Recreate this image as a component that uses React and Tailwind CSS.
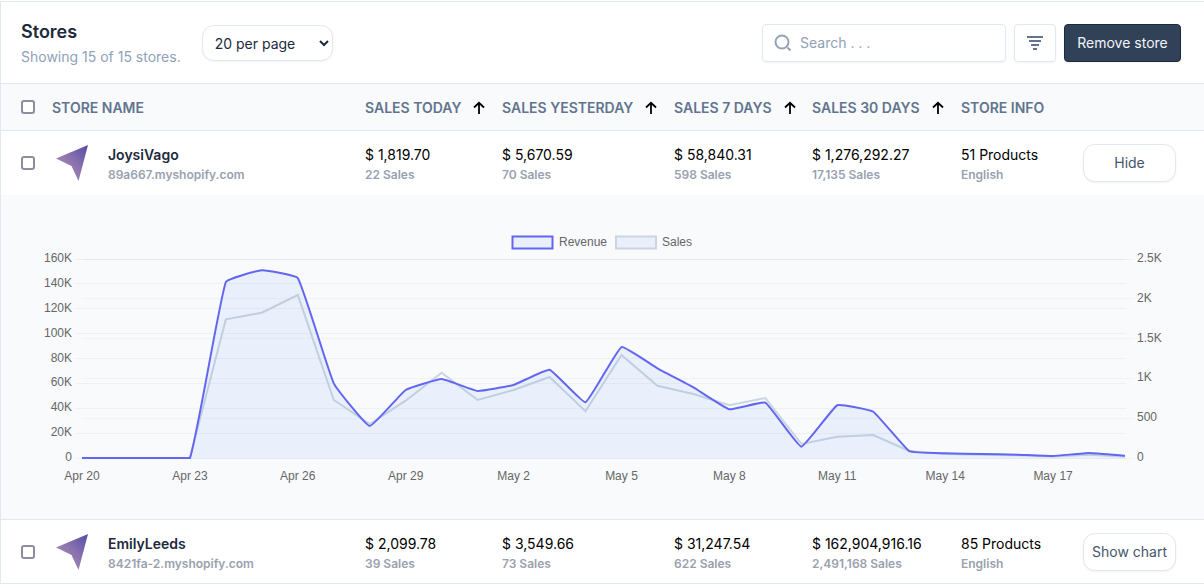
import React, { useState } from 'react';

const stores = [
  {
    name: 'JoysiVago',
    domain: '89a667.myshopify.com',
    today: ['$ 1,819.70', '22 Sales'],
    yesterday: ['$ 5,670.59', '70 Sales'],
    week: ['$ 58,840.31', '598 Sales'],
    month: ['$ 1,276,292.27', '17,135 Sales'],
    info: ['51 Products', 'English'],
  },
  {
    name: 'EmilyLeeds',
    domain: '8421fa-2.myshopify.com',
    today: ['$ 2,099.78', '39 Sales'],
    yesterday: ['$ 3,549.66', '73 Sales'],
    week: ['$ 31,247.54', '622 Sales'],
    month: ['$ 162,904,916.16', '2,491,168 Sales'],
    info: ['85 Products', 'English'],
  },
];

// Revenue in thousands, sales in orders, one value per day from Apr 20
const revenue = [
  0, 0, 0, 0, 141.5, 151, 144.7, 60, 25.7, 54.7, 63.5, 53.9, 58.7, 71, 44.8,
  89.2, 72.1, 56.8, 39.2, 44.5, 9.1, 42.4, 37.2, 5.6, 3.8, 3.2, 2.7, 1.6, 4, 1.8,
];
const sales = [
  0, 0, 0, 0, 1742, 1825, 2048, 729, 427, 720, 1072, 729, 854, 1018, 587,
  1294, 908, 804, 662, 754, 176, 268, 289, 88, 50, 40, 35, 20, 40, 20,
];
const dayLabels = ['Apr 20', 'Apr 23', 'Apr 26', 'Apr 29', 'May 2', 'May 5', 'May 8', 'May 11', 'May 14', 'May 17'];
const revenueTicks = [0, 20, 40, 60, 80, 100, 120, 140, 160];
const salesTicks = [0, 500, 1000, 1500, 2000, 2500];

const TOP = 64;
const BOTTOM = 263;
const LEFT = 81;
const RIGHT = 1125;
const STEP = (RIGHT - LEFT - 1) / (revenue.length - 1);

const toPoints = (values, max) =>
  values.map((value, i) => [LEFT + i * STEP, BOTTOM - (value / max) * (BOTTOM - TOP)]);

const clamp = (y) => Math.min(BOTTOM, Math.max(TOP, y));

const curvePath = (points, tension) => {
  const controls = points.map((point, i) => {
    const prev = points[i - 1] || point;
    const next = points[i + 1] || point;
    const before = Math.hypot(point[0] - prev[0], point[1] - prev[1]);
    const after = Math.hypot(next[0] - point[0], next[1] - point[1]);
    const a = (tension * before) / (before + after);
    const b = (tension * after) / (before + after);
    const dx = next[0] - prev[0];
    const dy = next[1] - prev[1];
    return {
      in: [point[0] - a * dx, clamp(point[1] - a * dy)],
      out: [point[0] + b * dx, clamp(point[1] + b * dy)],
    };
  });
  return points
    .map((point, i) => (i === 0 ? `M${point}` : `C${controls[i - 1].out} ${controls[i].in} ${point}`))
    .join(' ');
};

const formatSales = (value) => (value >= 1000 ? `${value / 1000}K` : value);

const SalesChart = () => {
  const revenueLine = curvePath(toPoints(revenue, 160), 0.1);
  const salesLine = curvePath(toPoints(sales, 2500), 0);
  const tickY = (ratio) => BOTTOM - ratio * (BOTTOM - TOP);
  const gridY = (ratio) => Math.floor(tickY(ratio)) + 0.5;

  return (
    <svg
      viewBox="0 0 1203 324"
      className="block w-full font-['Liberation_Sans',Arial,sans-serif] text-[12px]"
      role="img"
      aria-label="Revenue and sales per day"
    >
      {/* Legend */}
      <rect x="511.5" y="41.5" width="40" height="12" fill="#3b82f6" fillOpacity="0.08" stroke="#6366f1" strokeWidth="2" />
      <text x="558" y="51" fill="#666">Revenue</text>
      <rect x="615" y="41.5" width="40" height="12" fill="#3b82f6" fillOpacity="0.08" stroke="#cbd5e1" strokeWidth="2" />
      <text x="661" y="51" fill="#666">Sales</text>

      {/* Axes */}
      {revenueTicks.map((tick) => (
        <g key={tick}>
          <line x1="74" x2={RIGHT} y1={gridY(tick / 160)} y2={gridY(tick / 160)} stroke="#000" strokeOpacity="0.04" />
          <text x="71" y={tickY(tick / 160) + 3} textAnchor="end" fill="#666">{tick ? `${tick}K` : 0}</text>
        </g>
      ))}
      {salesTicks.map((tick) => (
        <g key={tick}>
          <line x1={LEFT} x2="1133" y1={gridY(tick / 2500)} y2={gridY(tick / 2500)} stroke="#000" strokeOpacity="0.03" />
          <text x="1136" y={tickY(tick / 2500) + 3} fill="#666">{formatSales(tick)}</text>
        </g>
      ))}
      {dayLabels.map((label, i) => (
        <text key={label} x={LEFT + i * 3 * STEP} y="285" textAnchor="middle" fill="#666">{label}</text>
      ))}

      {/* Lines */}
      <path d={salesLine} fill="none" stroke="#cbd5e1" strokeWidth="2" />
      <path d={`${revenueLine} V${BOTTOM} H${LEFT} Z`} fill="#3b82f6" fillOpacity="0.08" />
      <path d={revenueLine} fill="none" stroke="#6366f1" strokeWidth="2" />
    </svg>
  );
};

const SortArrow = () => (
  <svg viewBox="0 0 12 14" className="h-3.5 w-3" fill="none" stroke="#000" strokeWidth="1.8">
    <path d="M6 13V2M1 6.5 6 1.8l5 4.7" />
  </svg>
);

const StoreLogo = ({ id }) => (
  <svg viewBox="0 0 32 36" className="h-9 w-8 shrink-0">
    <defs>
      <linearGradient id={id} x1="1" y1="0" x2="0.2" y2="0.8">
        <stop offset="0" stopColor="#564ba5" />
        <stop offset="0.6" stopColor="#8d74ae" />
        <stop offset="1" stopColor="#a789b7" />
      </linearGradient>
    </defs>
    <path d="M32 0 22.5 36 15.5 21 0 13.5Z" fill={`url(#${id})`} />
  </svg>
);

const Checkbox = ({ label, ...props }) => (
  <input
    type="checkbox"
    aria-label={label}
    className="block h-3.5 w-3.5 appearance-none rounded-[3px] border-2 border-[#8f8d9e] bg-white checked:border-indigo-500 checked:bg-indigo-500"
    {...props}
  />
);

const SortHeader = ({ children }) => (
  <th className="p-0 pt-0.5 text-left font-semibold">
    <button className="flex items-center gap-3 whitespace-nowrap uppercase">
      {children}
      <SortArrow />
    </button>
  </th>
);

const ValueCell = ({ value }) => (
  <td className="p-0 pt-1 whitespace-nowrap">
    <div className="text-sm leading-5 text-black">{value[0]}</div>
    <div className="text-xs leading-5 font-semibold text-gray-400">{value[1]}</div>
  </td>
);

const App = () => {
  const [perPage, setPerPage] = useState('20');
  const [search, setSearch] = useState('');
  const [openStore, setOpenStore] = useState('JoysiVago');
  const [selected, setSelected] = useState([]);

  const toggleSelected = (name) => {
    setSelected(prev => prev.includes(name) ? prev.filter(item => item !== name) : [...prev, name]);
  };

  return (
    <div className="bg-white pt-px font-[Inter,sans-serif] text-sm">
      <section className="border-y border-l border-slate-200">
        {/* Toolbar */}
        <header className="flex items-center justify-between border-b border-slate-200 pt-[17px] pr-[23px] pb-4 pl-5">
          <div className="flex items-center gap-[21px]">
            <div className="flex flex-col gap-0.5">
              <h1 className="text-lg leading-[26px] font-semibold text-slate-800">Stores</h1>
              <p className="leading-5 text-slate-400">Showing 15 of 15 stores.</p>
            </div>
            <select
              aria-label="Stores per page"
              value={perPage}
              onChange={(e) => setPerPage(e.target.value)}
              className="h-9 w-[131px] rounded-xl border border-slate-200 bg-white pl-2 text-slate-800 shadow-xs"
            >
              <option value="20">20 per page</option>
              <option value="50">50 per page</option>
              <option value="100">100 per page</option>
            </select>
          </div>

          <div className="flex gap-2">
            <label className="flex h-[38px] w-61 items-center gap-2 rounded border border-slate-200 px-[11px] shadow-xs">
              <svg viewBox="0 0 18 18" className="h-[18px] w-[18px] shrink-0" fill="none" stroke="#94a3b8" strokeWidth="2">
                <circle cx="8" cy="8" r="6.5" />
                <path d="m13.5 13.5 3 3" />
              </svg>
              <input
                type="text"
                aria-label="Search stores"
                placeholder="Search . . ."
                value={search}
                onChange={(e) => setSearch(e.target.value)}
                className="min-w-0 flex-1 text-slate-800 outline-none placeholder:text-slate-400"
              />
            </label>
            <button aria-label="Filter" className="flex w-[42px] items-center justify-center rounded border border-slate-200 shadow-xs">
              <svg viewBox="0 0 16 14" className="h-3.5 w-4" fill="#64748b">
                <path d="M0 0h16v2H0zM2 4h12v2H2zM4 8h8v2H4zM6 12h4v2H6z" />
              </svg>
            </button>
            <button className="min-w-[117px] rounded border border-slate-800 bg-slate-700 px-3 whitespace-nowrap text-slate-100 shadow-xs">
              Remove store
            </button>
          </div>
        </header>

        {/* Stores table */}
        <table className="w-full table-fixed border-separate border-spacing-0">
          <colgroup>
            <col className="w-[51px]" />
            <col />
            <col className="w-[137px]" />
            <col className="w-[172px]" />
            <col className="w-[138px]" />
            <col className="w-[149px]" />
            <col className="w-[122px]" />
            <col className="w-[121px]" />
          </colgroup>
          <thead>
            <tr className="h-[47px] bg-slate-50 text-slate-500 uppercase *:border-b *:border-slate-200">
              <th className="p-0 pl-5">
                <Checkbox
                  label="Select all stores"
                  checked={selected.length === stores.length}
                  onChange={(e) => setSelected(e.target.checked ? stores.map(store => store.name) : [])}
                />
              </th>
              <th className="p-0 pt-0.5 text-left font-semibold">Store name</th>
              <SortHeader>Sales today</SortHeader>
              <SortHeader>Sales yesterday</SortHeader>
              <SortHeader>Sales 7 days</SortHeader>
              <SortHeader>Sales 30 days</SortHeader>
              <th className="p-0 pt-0.5 text-left font-semibold">Store info</th>
              <th className="p-0" aria-label="Actions" />
            </tr>
          </thead>
          {stores.map((store, index) => (
            <tbody key={store.name}>
              <tr className={index > 0 ? 'h-16 *:border-t *:border-slate-200' : 'h-16'}>
                <td className="p-0 pl-5">
                  <Checkbox
                    label={`Select ${store.name}`}
                    checked={selected.includes(store.name)}
                    onChange={() => toggleSelected(store.name)}
                  />
                </td>
                <td className="p-0">
                  <div className="flex items-center gap-5 pl-1">
                    <StoreLogo id={`logo-${store.name}`} />
                    <div className="pt-1">
                      <div className="text-sm leading-5 font-semibold text-slate-800">{store.name}</div>
                      <div className="text-xs leading-5 font-semibold text-gray-400">{store.domain}</div>
                    </div>
                  </div>
                </td>
                <ValueCell value={store.today} />
                <ValueCell value={store.yesterday} />
                <ValueCell value={store.week} />
                <ValueCell value={store.month} />
                <ValueCell value={store.info} />
                <td className="p-0">
                  <button
                    onClick={() => setOpenStore(openStore === store.name ? null : store.name)}
                    className="block h-[38px] w-[93px] rounded-xl border border-slate-200 bg-white whitespace-nowrap text-slate-600 shadow-xs"
                  >
                    {openStore === store.name ? 'Hide' : 'Show chart'}
                  </button>
                </td>
              </tr>
              {openStore === store.name && (
                <tr>
                  <td colSpan={8} className="bg-slate-50 p-0">
                    <SalesChart />
                  </td>
                </tr>
              )}
            </tbody>
          ))}
        </table>
      </section>
    </div>
  );
};

export default App;
